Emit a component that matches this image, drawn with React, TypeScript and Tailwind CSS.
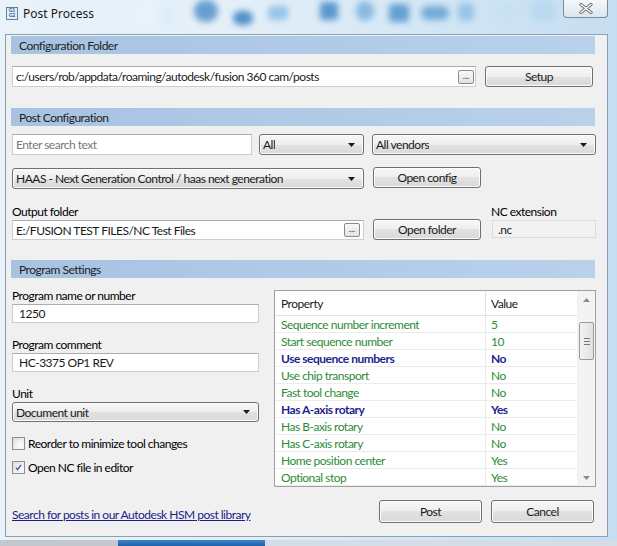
const font = "font-['Lato','Noto_Sans',sans-serif]";

const btn =
  "flex items-center justify-center border border-[#707070] rounded-[3px] bg-[linear-gradient(#f7f7f7_0%,#eeeeee_50%,#e2e2e2_50%,#d9d9d9_100%)] shadow-[inset_0_0_0_1px_#fcfcfc] text-[#1a1a1a]";

const input = "flex items-center bg-white border border-[#c9cfd6] border-t-[#abadb3] pl-[3px] text-[#1a1a1a]";

function Arrow() {
  return (
    <svg width="7" height="4" viewBox="0 0 7 4" className="shrink-0">
      <path d="M0 0h7L3.5 4z" fill="#1a1a1a" />
    </svg>
  );
}

function Combo({ w, text, h = "h-[21px]" }: { w: string; text: string; h?: string }) {
  return (
    <div className={`${btn} ${w} ${h} !justify-between pl-[3px] pr-[8px]`}>
      <span className="truncate">{text}</span>
      <Arrow />
    </div>
  );
}

function Dots({ className = "" }: { className?: string }) {
  return (
    <div
      className={`w-[16px] h-[14px] rounded-[2px] border border-[#8a8a8a] bg-[linear-gradient(#f8f8f8,#e2e2e2)] text-[9px] leading-[8px] tracking-normal flex items-end justify-center pb-[3px] text-[#333] ${className}`}
    >
      ...
    </div>
  );
}

function Header({ title }: { title: string }) {
  return (
    <div className="-ml-[1px] w-[584px] h-[18px] flex items-center pl-[8px] bg-[linear-gradient(90deg,#a7c3e2,#b9d1eb)] text-[#1e1e1e]">
      {title}
    </div>
  );
}

function Check({ checked }: { checked?: boolean }) {
  return (
    <div className="w-[13px] h-[13px] border border-[#8e8f8f] bg-[linear-gradient(135deg,#dcdcdc,#fbfbfb)] p-[2px] shrink-0">
      <div className="w-full h-full bg-[linear-gradient(135deg,#e9e9e9,#ffffff)] flex items-center justify-center">
        {checked && (
          <svg width="9" height="9" viewBox="0 0 9 9">
            <path d="M1.2 4.6L3.4 7.2L7.8 1.2" fill="none" stroke="#3d5a99" strokeWidth="1.8" />
          </svg>
        )}
      </div>
    </div>
  );
}

const rows: { name: string; value: string; bold?: boolean }[] = [
  { name: "Sequence number increment", value: "5" },
  { name: "Start sequence number", value: "10" },
  { name: "Use sequence numbers", value: "No", bold: true },
  { name: "Use chip transport", value: "No" },
  { name: "Fast tool change", value: "No" },
  { name: "Has A-axis rotary", value: "Yes", bold: true },
  { name: "Has B-axis rotary", value: "No" },
  { name: "Has C-axis rotary", value: "No" },
  { name: "Home position center", value: "Yes" },
  { name: "Optional stop", value: "Yes" },
];

function PropTable() {
  return (
    <div className="mt-[2px] w-[322px] h-[197px] border border-[#a0a0a0] bg-white flex overflow-hidden">
      <div className="flex-1 flex flex-col">
        <div className="h-[26px] flex border-b border-[#e2e2e2] text-[#1a1a1a]">
          <div className="w-[211px] pl-[6px] flex items-center border-r border-[#e2e2e2]">Property</div>
          <div className="flex-1 pl-[5px] flex items-center">Value</div>
        </div>
        {rows.map((r) => (
          <div
            key={r.name}
            className={`h-[17px] shrink-0 flex border-b border-[#ececec] ${
              r.bold ? "text-[#1f1f8f] font-bold" : "text-[#2e8b35]"
            }`}
          >
            <div className="w-[211px] pl-[6px] flex items-center border-r border-[#ececec]">{r.name}</div>
            <div className="flex-1 pl-[5px] flex items-center">{r.value}</div>
          </div>
        ))}
      </div>
      <div className="w-[18px] bg-[#f3f3f3] flex flex-col items-center border-l border-[#f0f0f0]">
        <div className="h-[17px] flex items-center justify-center">
          <svg width="7" height="4" viewBox="0 0 7 4">
            <path d="M0 4h7L3.5 0z" fill="#8a8a8a" />
          </svg>
        </div>
        <div className="mt-[14px] w-[15px] h-[38px] rounded-[2px] border border-[#9a9a9a] bg-[linear-gradient(90deg,#f4f4f4,#e0e0e0)] flex flex-col items-center justify-center gap-[2px]">
          <div className="w-[6px] h-px bg-[#7a7a7a]" />
          <div className="w-[6px] h-px bg-[#7a7a7a]" />
          <div className="w-[6px] h-px bg-[#7a7a7a]" />
        </div>
        <div className="flex-1" />
        <div className="h-[17px] flex items-center justify-center">
          <svg width="7" height="4" viewBox="0 0 7 4">
            <path d="M0 0h7L3.5 4z" fill="#8a8a8a" />
          </svg>
        </div>
      </div>
    </div>
  );
}

function TitleBar() {
  const blobs = [
    "left-[135px] top-[2px] w-[30px] h-[22px] bg-[#e8f3fb] opacity-80",
    "left-[160px] top-[4px] w-[14px] h-[22px] bg-[#dceefa] opacity-90",
    "left-[194px] top-[0px] w-[24px] h-[22px] rounded-full bg-[#5b97cc] opacity-90",
    "left-[233px] top-[11px] w-[20px] h-[14px] rounded-full bg-[#3f86c6] opacity-90",
    "left-[268px] top-[6px] w-[20px] h-[14px] rounded-[4px] bg-[#8fc0e6] opacity-90",
    "left-[320px] top-[2px] w-[18px] h-[18px] rounded-[3px] bg-[#4b8fcc] opacity-90",
    "left-[356px] top-[1px] w-[18px] h-[20px] rounded-full bg-[#7fb5e0] opacity-90",
    "left-[389px] top-[4px] w-[20px] h-[18px] rounded-[3px] bg-[#5a98d0] opacity-90",
    "left-[421px] top-[6px] w-[28px] h-[14px] rounded-full bg-[#6aa5d6] opacity-90",
    "left-[458px] top-[3px] w-[16px] h-[18px] rounded-[3px] bg-[#8dbde3] opacity-80",
    "left-[496px] top-[3px] w-[20px] h-[18px] rounded-full bg-[#c6e0f3] opacity-80",
    "left-[530px] top-[0px] w-[26px] h-[22px] rounded-full bg-[#b5d6ef] opacity-70",
  ];
  return (
    <div className="relative h-[34px] overflow-hidden">
      {blobs.map((b) => (
        <div key={b} className={`absolute blur-[3px] ${b}`} />
      ))}
      <div className="relative flex items-center h-[26px] pl-[6px] gap-[5px]">
        <div className="w-[12px] h-[13px] bg-[#e7eef6] border border-[#5d7fa8] flex flex-col items-center justify-center text-[5px] leading-[5px] tracking-normal font-bold text-[#2b5c94]">
          <span>G1</span>
          <span>G2</span>
        </div>
        <span className="text-[12px] tracking-normal text-[#1a1a1a] font-['Noto_Sans',sans-serif]">Post Process</span>
      </div>
      <div className="absolute left-[563px] top-0 w-[45px] h-[18px] rounded-b-[4px] border border-t-0 border-[#7d8a99] bg-[linear-gradient(#f4f8fb,#dbe6ef)] flex items-center justify-center">
        <svg width="14" height="11" viewBox="0 0 14 11">
          <path d="M2 1.5L12 9.5M12 1.5L2 9.5" stroke="#6b6b6b" strokeWidth="3.2" strokeLinecap="round" />
          <path d="M2 1.5L12 9.5M12 1.5L2 9.5" stroke="#ffffff" strokeWidth="1.4" strokeLinecap="round" />
        </svg>
      </div>
    </div>
  );
}

export default function App() {
  return (
    <div
      className={`${font} text-[12px] leading-[15px] tracking-[-0.5px] w-[617px] h-[546px] overflow-hidden bg-[linear-gradient(90deg,#e9f2f9_0%,#e3eff8_40%,#d2e6f5_70%,#c6def1_100%)] flex flex-col`}
    >
      <TitleBar />
      <div className="ml-[5px] w-[603px] h-[503px] bg-[#f0f0f0] border border-[#8aa0b6] pl-[6px] flex flex-col shrink-0">
        <div className="mt-[1px]">
          <Header title="Configuration Folder" />
        </div>
        <div className="mt-[12px] flex gap-[9px]">
          <div className={`${input} w-[464px] h-[21px] justify-between pr-[1px]`}>
            <span>c:/users/rob/appdata/roaming/autodesk/fusion 360 cam/posts</span>
            <Dots />
          </div>
          <div className={`${btn} w-[108px] h-[21px]`}>Setup</div>
        </div>

        <div className="mt-[21px]">
          <Header title="Post Configuration" />
        </div>
        <div className="mt-[8px] flex">
          <div className={`${input} w-[240px] h-[21px] text-[#777]`}>Enter search text</div>
          <div className="ml-[7px]">
            <Combo w="w-[105px]" text="All" />
          </div>
          <div className="ml-[8px]">
            <Combo w="w-[224px]" text="All vendors" />
          </div>
        </div>
        <div className="mt-[13px] flex gap-[9px] items-start">
          <Combo w="w-[352px]" text="HAAS - Next Generation Control / haas next generation" />
          <div className={`${btn} w-[108px] h-[21px] -mt-[1px]`}>Open config</div>
        </div>

        <div className="mt-[15px] flex h-[15px]">
          <div className="w-[479px]">Output folder</div>
          <div>NC extension</div>
        </div>
        <div className="mt-[1px] flex items-start">
          <div className={`${input} w-[352px] h-[20px] justify-between pr-[3px]`}>
            <span>E:/FUSION TEST FILES/NC Test Files</span>
            <Dots />
          </div>
          <div className={`${btn} ml-[9px] w-[108px] h-[21px] -mt-[1px]`}>Open folder</div>
          <div className="ml-[11px] w-[104px] h-[18px] bg-[#f2f2f2] border border-[#dadada] pl-[5px] flex items-center text-[#1a1a1a]">
            .nc
          </div>
        </div>

        <div className="mt-[20px]">
          <Header title="Program Settings" />
        </div>

        <div className="mt-[10px] flex">
          <div className="w-[247px] flex flex-col">
            <div className="h-[15px]">Program name or number</div>
            <div className={`${input} mt-[1px] h-[19px] pl-[6px]`}>1250</div>
            <div className="mt-[14px] h-[15px]">Program comment</div>
            <div className={`${input} mt-[1px] h-[19px] pl-[6px]`}>HC-3375 OP1 REV</div>
            <div className="mt-[14px] h-[15px]">Unit</div>
            <div className="mt-[1px]">
              <Combo w="w-[247px]" h="h-[20px]" text="Document unit" />
            </div>
            <div className="mt-[13px] h-[16px] flex items-center gap-[3px]">
              <Check />
              <span>Reorder to minimize tool changes</span>
            </div>
            <div className="mt-[8px] h-[16px] flex items-center gap-[3px]">
              <Check checked />
              <span>Open NC file in editor</span>
            </div>
          </div>
          <div className="ml-[15px]">
            <PropTable />
          </div>
        </div>

        <div className="mt-[13px] flex items-start">
          <a className="mt-[7px] w-[367px] underline text-[#1c1c86] cursor-pointer">
            Search for posts in our Autodesk HSM post library
          </a>
          <div className={`${btn} w-[103px] h-[23px]`}>Post</div>
          <div className={`${btn} ml-[9px] w-[103px] h-[23px]`}>Cancel</div>
        </div>
      </div>
      <div className="mt-[3px] flex h-[6px]">
        <div className="w-[118px] bg-[#c4c8cc]" />
        <div className="w-[147px] bg-[linear-gradient(#3d86c9,#1d5fa8)]" />
        <div className="flex-1 bg-[#d4dde5]" />
      </div>
    </div>
  );
}
